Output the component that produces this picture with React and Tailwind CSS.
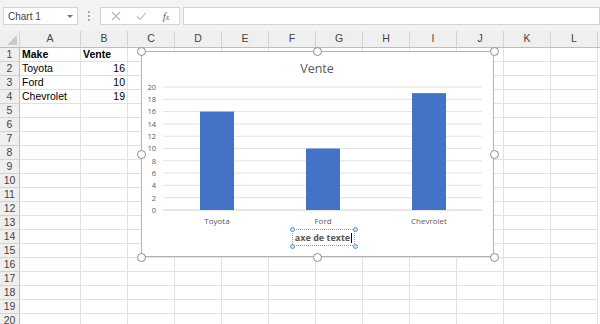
import React from 'react';

const cols = [
  { key: 'A', w: 61 },
  { key: 'B', w: 47 },
  { key: 'C', w: 47 },
  { key: 'D', w: 47 },
  { key: 'E', w: 47 },
  { key: 'F', w: 47 },
  { key: 'G', w: 47 },
  { key: 'H', w: 47 },
  { key: 'I', w: 47 },
  { key: 'J', w: 47 },
  { key: 'K', w: 47 },
  { key: 'L', w: 47 },
];

const cells = {
  '1A': { v: 'Make', bold: true },
  '1B': { v: 'Vente', bold: true },
  '2A': { v: 'Toyota' },
  '2B': { v: '16', right: true },
  '3A': { v: 'Ford' },
  '3B': { v: '10', right: true },
  '4A': { v: 'Chevrolet' },
  '4B': { v: '19', right: true },
};

const data = [
  { label: 'Toyota', value: 16, x: 59 },
  { label: 'Ford', value: 10, x: 165 },
  { label: 'Chevrolet', value: 19, x: 271 },
];

// chart sits over the grid; grid starts 31px below page top
const TOP = 31;

function Handle({ x, y }) {
  return (
    <div
      className="absolute w-[9px] h-[9px] rounded-full bg-white border-[1.5px] border-[#8c8c8c]"
      style={{ left: x - 4.5, top: y - TOP - 4.5 }}
    />
  );
}

function Chart() {
  const y0 = 159;
  const step = 6.15;
  return (
    <div className="absolute left-[141px] top-[20px] w-[353px] h-[206px] bg-white border border-[#b3b3b3]">
      <svg width="353" height="206" className="absolute left-[-1px] top-[-1px]" style={{ fontFamily: '"Open Sans", "Liberation Sans", sans-serif' }}>
        <text x="176" y="22" textAnchor="middle" fontSize="12.5" fill="#595959">Vente</text>
        {Array.from({ length: 11 }).map((_, i) => {
          const y = y0 - i * 2 * step;
          return (
            <g key={i}>
              <line x1="22" x2="341" y1={y} y2={y} stroke={i === 0 ? '#d0d0d0' : '#e2e2e2'} strokeWidth="1" />
              <text x="15" y={y + 2.8} textAnchor="end" fontSize="7.5" fill="#595959">{i * 2}</text>
            </g>
          );
        })}
        {data.map((d) => (
          <g key={d.label}>
            <rect x={d.x} y={y0 - d.value * step} width="34" height={d.value * step} fill="#4472C4" />
            <text x={d.x + 17} y="173" textAnchor="middle" fontSize="8" fill="#595959">{d.label}</text>
          </g>
        ))}
      </svg>
      <div className="absolute left-[150px] top-[177px] w-[63px] h-[17px] border border-dotted border-[#9a9a9a] flex items-center justify-center">
        <span className="text-[9px] font-bold text-[#595959] leading-none" style={{ fontFamily: '"Open Sans", "Liberation Sans", sans-serif' }}>
          axe de texte
        </span>
        <span className="w-px h-[10px] bg-black ml-[1px]" />
        {[[0, 0], [63, 0], [0, 17], [63, 17]].map(([x, y], i) => (
          <div
            key={i}
            className="absolute w-[5px] h-[5px] rounded-full bg-[#cfe3f7] border border-[#5b9bd5]"
            style={{ left: x - 3.5, top: y - 3.5 }}
          />
        ))}
      </div>
    </div>
  );
}

export default function App() {
  const rows = Array.from({ length: 20 }, (_, i) => i + 1);
  return (
    <div className="w-[600px] h-[324px] overflow-hidden bg-white text-[#222]" style={{ fontFamily: '"Liberation Sans", Arial, sans-serif' }}>
      {/* formula bar */}
      <div className="h-[31px] bg-[#f3f3f3] flex items-center pl-[3px] pt-[1px]">
        <div className="w-[75px] h-[18px] bg-white border border-[#d4d4d4] flex items-center justify-between px-[4px]">
          <span className="text-[10px] text-[#444]">Chart 1</span>
          <span className="w-0 h-0 border-l-[3px] border-r-[3px] border-t-[3px] border-l-transparent border-r-transparent border-t-[#777]" />
        </div>
        <div className="w-[22px] flex flex-col items-center gap-[2px]">
          <span className="w-[2px] h-[2px] bg-[#aaa]" />
          <span className="w-[2px] h-[2px] bg-[#aaa]" />
          <span className="w-[2px] h-[2px] bg-[#aaa]" />
        </div>
        <div className="w-[80px] h-[18px] bg-white border border-[#d4d4d4] flex items-center justify-around px-[2px]">
          <svg width="10" height="10" viewBox="0 0 10 10"><path d="M1 1L9 9M9 1L1 9" stroke="#b8b8b8" strokeWidth="1.1" /></svg>
          <svg width="11" height="10" viewBox="0 0 11 10"><path d="M1 5.5L4 8.5L10 1.5" stroke="#b8b8b8" strokeWidth="1.1" fill="none" /></svg>
          <span className="text-[11px] italic text-[#666]" style={{ fontFamily: '"Liberation Serif", serif' }}>f<span className="text-[8px]">x</span></span>
        </div>
        <div className="ml-[3px] flex-1 h-[18px] bg-white border border-[#d4d4d4]" />
      </div>

      <div className="relative">
        {/* column headers */}
        <div className="flex h-[17px] bg-[#efefef] border-b border-[#bdbdbd]">
          <div className="w-[20px] shrink-0 border-r border-[#d4d4d4] relative">
            <svg className="absolute right-[2px] bottom-[2px]" width="10" height="10"><path d="M10 0L10 10L0 10Z" fill="#c9c9c9" /></svg>
          </div>
          {cols.map((c) => (
            <div key={c.key} className="shrink-0 border-r border-[#d4d4d4] flex items-center justify-center text-[10.5px] text-[#444]" style={{ width: c.w }}>
              {c.key}
            </div>
          ))}
        </div>

        {rows.map((r) => (
          <div key={r} className="flex h-[14px]">
            <div className="w-[20px] shrink-0 bg-[#efefef] border-r border-[#bdbdbd] border-b border-b-[#d4d4d4] flex items-center justify-center text-[10.5px] text-[#444]">
              {r}
            </div>
            {cols.map((c) => {
              const cell = cells[r + c.key];
              return (
                <div
                  key={c.key}
                  className={`shrink-0 border-r border-b border-[#e1e1e1] flex items-center px-[2px] text-[10.5px] leading-none text-black ${cell?.right ? 'justify-end' : ''} ${cell?.bold ? 'font-bold' : ''}`}
                  style={{ width: c.w }}
                >
                  {cell?.v}
                </div>
              );
            })}
          </div>
        ))}

        <Chart />
        <Handle x={141} y={51} />
        <Handle x={317} y={51} />
        <Handle x={494} y={51} />
        <Handle x={141} y={154} />
        <Handle x={494} y={154} />
        <Handle x={141} y={257} />
        <Handle x={317} y={257} />
        <Handle x={494} y={257} />
      </div>
    </div>
  );
}
